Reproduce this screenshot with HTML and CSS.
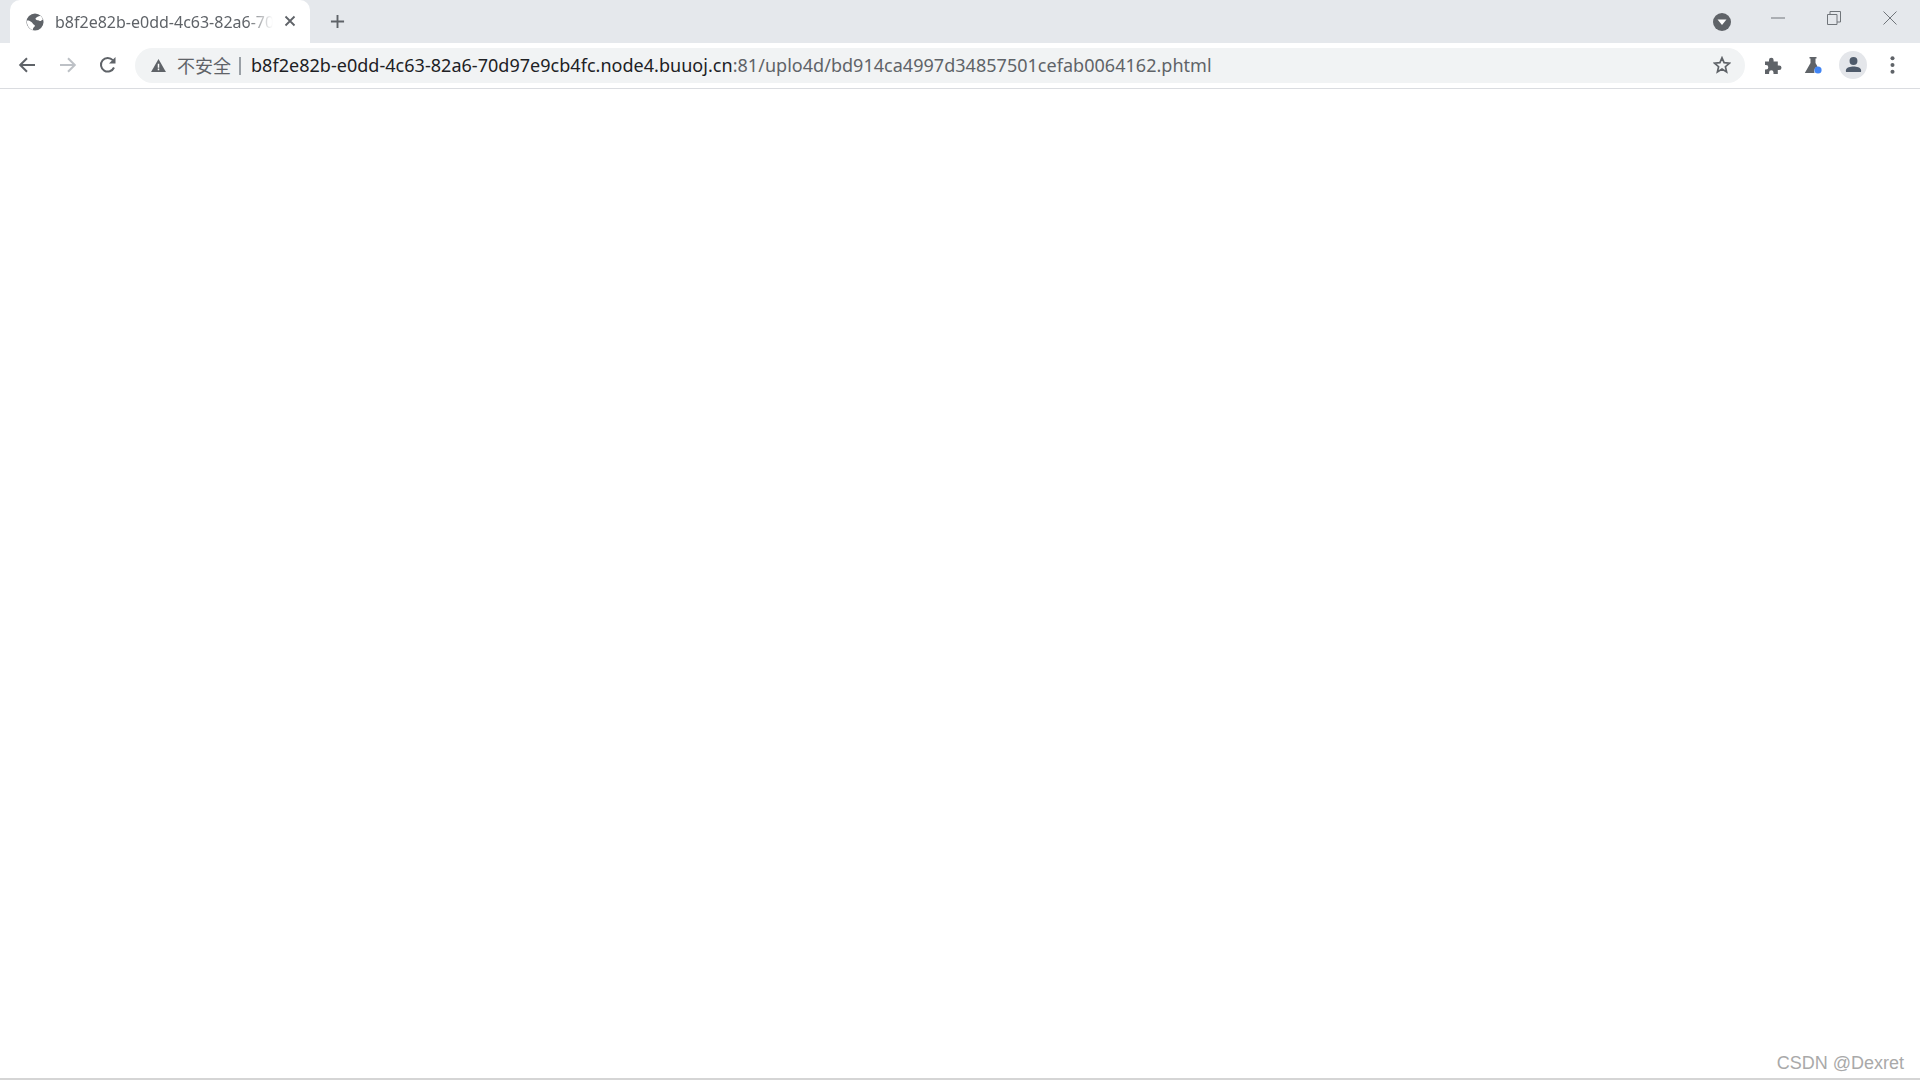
FILE: index.html
```html
<!DOCTYPE html>
<html lang="zh-CN">
<head>
    <meta charset="UTF-8">
    <title>b8f2e82b-e0dd-4c63-82a6-70d97e9cb4fc.node4.buuoj.cn</title>
    <link rel="stylesheet" href="styles.css">
</head>
<body>
    <div class="window">
        <div class="tabstrip">
            <div class="tab">
                <svg class="favicon" viewBox="0 0 20 20">
                    <circle cx="10" cy="10" r="9.500" fill="#5f6368"/>
                    <path d="M.8 8.500c2.200-.5 3.700 .2 5.200 1.500s1.500 2.300 3 3 .8 2-.2 2.800-1 2-1.300 3.200C4.500 18 1 14.500 .8 8.500zM10.500 6c1.500-1.500 3-2.500 5.500-3 1.300 1 2.400 2.600 2.800 4.300-.8 .2-1.300 1-2.300 1.500s-2-.8-3-.8-2.700-.2-3-2z" fill="#fff"/>
                </svg>
                <span class="tab-title">b8f2e82b-e0dd-4c63-82a6-70d97e9cb4fc.node4.buuoj.cn</span>
                <svg class="tab-close" viewBox="0 0 12 12">
                    <path d="M1.500 1.500l9 9M10.500 1.500l-9 9" stroke="#5f6368" stroke-width="1.800"/>
                </svg>
            </div>
            <svg class="new-tab" viewBox="0 0 16 16">
                <path d="M8 1v14M1 8h14" stroke="#5f6368" stroke-width="2"/>
            </svg>
            <div class="strip-right">
                <svg class="tab-search" viewBox="0 0 18 18">
                    <circle cx="9" cy="9" r="9" fill="#5f6368"/>
                    <path d="M4.500 6.500h9L9 12z" fill="#fff"/>
                </svg>
                <div class="win-btns">
                    <svg class="win-btn" viewBox="0 0 14 14"><path d="M0 7h14" stroke="#70757a" stroke-width="1"/></svg>
                    <svg class="win-btn" viewBox="0 0 14 14"><path d="M.5 3.500h9.500v10H.5zM3 3.500V.5h10.500V11H10" fill="none" stroke="#70757a" stroke-width="1"/></svg>
                    <svg class="win-btn" viewBox="0 0 14 14"><path d="M.5 .5l13 13M13.500 .5l-13 13" stroke="#70757a" stroke-width="1"/></svg>
                </div>
            </div>
        </div>

        <div class="toolbar">
            <div class="nav-btns">
                <svg class="icon" viewBox="0 0 18 18"><path d="M17 9H2.500M9 2.200L2.200 9 9 15.800" fill="none" stroke="#5f6368" stroke-width="2"/></svg>
                <svg class="icon" viewBox="0 0 18 18"><path d="M1 9h14.500M9 2.200L15.800 9 9 15.800" fill="none" stroke="#bdc1c6" stroke-width="2"/></svg>
                <svg class="icon" viewBox="0 0 18 18"><path d="M15 11.500A6.800 6.800 0 1 1 13.800 4.200" fill="none" stroke="#5f6368" stroke-width="2"/><path d="M16.500 1v6.500H10z" fill="#5f6368"/></svg>
            </div>
            <div class="omnibox">
                <svg class="warn" viewBox="0 0 16 14"><path d="M8 0L16 14H0z" fill="#5f6368"/><path d="M7.200 5h1.600v4.500H7.200zM7.200 10.300h1.600V12H7.200z" fill="#fff"/></svg>
                <span class="insecure">不安全</span>
                <span class="divider"></span>
                <span class="url"><span class="host">b8f2e82b-e0dd-4c63-82a6-70d97e9cb4fc.node4.buuoj.cn</span>:81/uplo4d/bd914ca4997d34857501cefab0064162.phtml</span>
                <svg class="star" viewBox="0 0 18 18"><path d="M9 1.800l2.100 4.900 5.300 .5-4 3.500 1.200 5.200L9 13.100l-4.600 2.800 1.200-5.200-4-3.500 5.300-.5z" fill="none" stroke="#5f6368" stroke-width="1.700"/></svg>
            </div>
            <div class="actions">
                <svg class="icon" viewBox="0 0 18 18"><path d="M1 5.500h4V4a2.300 2.300 0 0 1 4.600 0v1.500h4.200v4h1.400a2.300 2.300 0 0 1 0 4.600h-1.400V18H9.500v-1.500a2.200 2.200 0 0 0-4.400 0V18H1v-4.500h1a2.300 2.300 0 0 0 0-4.600H1z" fill="#5f6368"/></svg>
                <svg class="icon" viewBox="0 0 18 18"><path d="M5.500 1h7v1.500h-1V7l2 3.500A5 5 0 0 0 10.500 17H.8L6.500 7V2.500h-1z" fill="#5f6368"/><circle cx="14" cy="14" r="3.600" fill="#4285f4"/></svg>
                <div class="avatar">
                    <svg class="avatar-img" viewBox="0 0 18 18"><circle cx="9" cy="5.200" r="4.200" fill="#4f5b6b"/><path d="M1 17v-1.800c0-3 5-4 8-4s8 1 8 4V17z" fill="#4f5b6b"/></svg>
                </div>
                <svg class="icon menu" viewBox="0 0 4 16"><circle cx="2" cy="2" r="1.800" fill="#5f6368"/><circle cx="2" cy="8" r="1.800" fill="#5f6368"/><circle cx="2" cy="14" r="1.800" fill="#5f6368"/></svg>
            </div>
        </div>

        <div class="page">
            <span class="watermark">CSDN @Dexret</span>
        </div>
    </div>
</body>
</html>
```

FILE: styles.css
```css
html, body {
    margin: 0;
    height: 100%;
    overflow: hidden;
    background: #fff;
}

.window {
    height: 1080px;
    display: flex;
    flex-direction: column;
    font-family: "Noto Sans", "Noto Sans CJK SC", sans-serif;
}

.tabstrip {
    height: 43px;
    flex: none;
    display: flex;
    align-items: flex-end;
    background: #e5e8ec;
    padding-left: 10px;
}

.tab {
    width: 300px;
    height: 43px;
    box-sizing: border-box;
    display: flex;
    align-items: center;
    padding: 0 13px 0 16px;
    background: #fff;
    border-radius: 10px 10px 0 0;
}

.favicon {
    width: 18px;
    height: 18px;
    flex: none;
    margin-right: 11px;
}

.tab-title {
    flex: 1;
    overflow: hidden;
    white-space: nowrap;
    font-size: 16px;
    color: #5f6368;
    -webkit-mask-image: linear-gradient(90deg, #000 88%, transparent 100%);
    mask-image: linear-gradient(90deg, #000 88%, transparent 100%);
}

.tab-close {
    width: 12px;
    height: 12px;
    flex: none;
    margin-left: 11px;
    margin-top: -2px;
    margin-right: 1px;
}

.new-tab {
    width: 15px;
    height: 15px;
    margin: 0 0 14px 20px;
}

.strip-right {
    margin-left: auto;
    align-self: stretch;
    display: flex;
    align-items: center;
}

.tab-search {
    width: 18px;
    height: 18px;
    margin-right: 40px;
}

.win-btns {
    display: flex;
    gap: 42px;
    margin: -8px 23px 0 0;
}

.win-btn {
    width: 14px;
    height: 14px;
}

.toolbar {
    height: 46px;
    flex: none;
    box-sizing: border-box;
    display: flex;
    align-items: center;
    background: #fff;
    border-bottom: 1px solid #dadce0;
    padding: 0 0 0 18px;
}

.icon {
    width: 18px;
    height: 18px;
    flex: none;
}

.nav-btns {
    display: flex;
    gap: 22.5px;
    margin: 0 18px 2px 0;
}

.omnibox {
    flex: 1;
    height: 35px;
    display: flex;
    align-items: center;
    background: #f1f3f4;
    border-radius: 18px;
    padding: 0 14px 0 16px;
}

.warn {
    width: 15px;
    height: 13px;
    flex: none;
    margin-right: 11px;
}

.insecure {
    font-size: 18px;
    color: #5f6368;
    margin-bottom: 2px;
}

.divider {
    width: 2px;
    height: 18px;
    background: #9aa0a6;
    margin: 0 10px 0 8px;
}

.url {
    flex: 1;
    white-space: nowrap;
    font-size: 18px;
    letter-spacing: .03px;
    color: #5f6368;
    margin-bottom: 2px;
}

.host {
    color: #202124;
}

.star {
    width: 18px;
    height: 18px;
    flex: none;
    margin-bottom: 1px;
}

.actions {
    display: flex;
    align-items: center;
    margin: 0 25px 2px 19px;
}

.actions .icon {
    margin-right: 22px;
}

.avatar {
    width: 28px;
    height: 28px;
    display: flex;
    align-items: center;
    justify-content: center;
    border-radius: 50%;
    background: #e4e6ea;
    margin: 0 23px 0 -5px;
}

.avatar-img {
    width: 17px;
    height: 17px;
}

.actions .menu {
    width: 5px;
    margin-right: 0;
}

.page {
    flex: 1;
    display: flex;
    align-items: flex-end;
    justify-content: flex-end;
    border-bottom: 2px solid #d5d5d5;
    padding-right: 16px;
}

.watermark {
    font-family: "Liberation Sans", sans-serif;
    font-size: 18px;
    color: #a9a9a9;
    margin-bottom: 4px;
}
```
